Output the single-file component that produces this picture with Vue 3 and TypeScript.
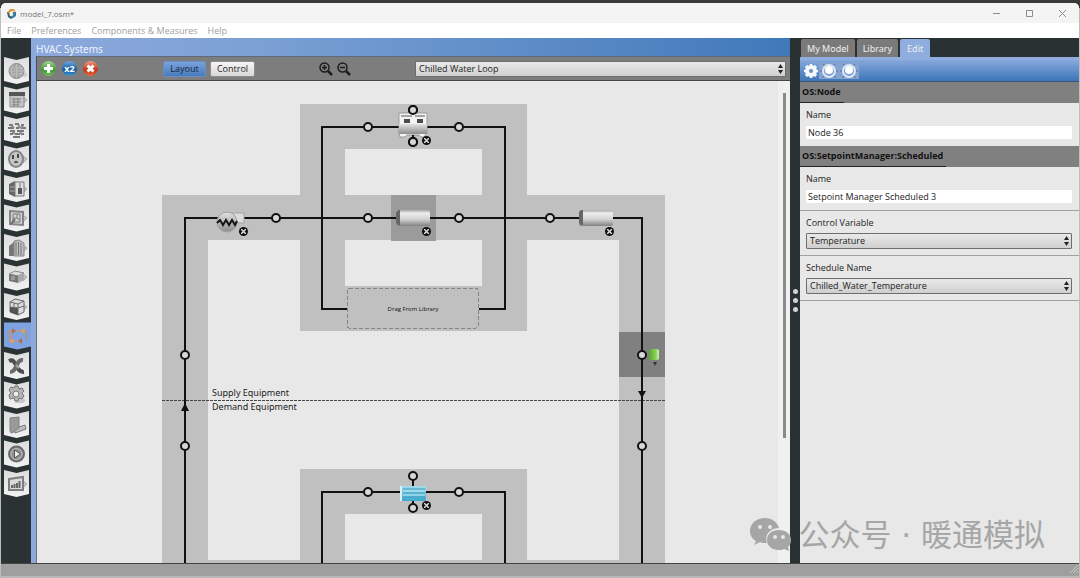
<script setup lang="ts">
import { ref } from 'vue'

interface Stroke {
  d: string
  f?: string
  s?: string
  w?: number
}
interface RailTab {
  name: string
  art: Stroke[]
}
interface Point {
  x: number
  y: number
}

const pointer: Stroke = { d: 'M17 7l4 3-4 4z', f: '#c2c2c2', s: '#a9a9a9', w: 1 }

const railTabs: RailTab[] = [
  {
    name: 'Site',
    art: [
      { d: 'M12 16h8l2-3-3-2z', f: '#cfcfcf' },
      { d: 'M3 10a7.5 7.5 0 1 0 15 0a7.5 7.5 0 1 0-15 0z', f: '#a6a6a6', s: '#8b8b8b' },
      { d: 'M4 7h13M3 10h15M4 13h13M10.500 3v14M7 4c-2 4-2 8 0 12M14 4c2 4 2 8 0 12', s: '#bcbcbc' },
    ],
  },
  {
    name: 'Schedules',
    art: [
      pointer,
      { d: 'M4 4h14v13H4z', f: '#c4c4c4', s: '#8a8a8a' },
      { d: 'M3 2h16v4H3z', f: '#555' },
      { d: 'M6 9h9M6 12h9M6 15h7M8 8v8M12 8v8', s: '#808080' },
    ],
  },
  {
    name: 'Constructions',
    art: [
      { d: 'M3 5h4M9 4h4M15 5h3M2 8h6M10 8h3M15 8h5M4 11h5M11 11h7M4 14h3M9 14h5M15 14h3M7 17h7', s: '#777', w: 2 },
      { d: 'M5 5l3 3M12 4l2 4M17 5l-2 4M6 11l3 3M14 11l2 4', s: '#8a8a8a', w: 2 },
    ],
  },
  {
    name: 'Loads',
    art: [
      pointer,
      { d: 'M3 10a7 8 0 1 0 14 0a7 8 0 1 0-14 0z', f: '#c6c6c6', s: '#858585', w: 2 },
      { d: 'M7 6v4M12 5v4', s: '#444', w: 2 },
      { d: 'M8 14c0-3 4-3 4 0z', f: '#555' },
    ],
  },
  {
    name: 'Space Types',
    art: [
      pointer,
      { d: 'M3 5l6-3v16l-6-3z', f: '#666' },
      { d: 'M9 3h9v14H9z', f: '#dedede', s: '#7a7a7a' },
      { d: 'M4 8h5M4 12h5', s: '#aaa' },
      { d: 'M12 9h4v6h-4z', f: '#555' },
      { d: 'M14 4v6', s: '#777' },
    ],
  },
  {
    name: 'Geometry',
    art: [
      pointer,
      { d: 'M4 3l13 1v13L4 16z', f: '#d2d2d2', s: '#858585', w: 2 },
      { d: 'M7 6h7v8H7zM7 10h4M11 6v4l3 2', s: '#7d7d7d' },
      { d: 'M5 16l4-5', s: '#666', w: 2 },
    ],
  },
  {
    name: 'Facility',
    art: [
      pointer,
      { d: 'M3 8l5-4v14H3z', f: '#777' },
      { d: 'M8 3l5-1 5 3v13H8z', f: '#c0c0c0', s: '#858585' },
      { d: 'M10 4v13M12.500 4v13M15 5v12M3 11h5M3 14h5', s: '#727272' },
    ],
  },
  {
    name: 'Spaces',
    art: [
      pointer,
      { d: 'M3 7l6-3 9 2-6 3z', f: '#dcdcdc', s: '#888' },
      { d: 'M3 7l9 2v7l-9-2z', f: '#777' },
      { d: 'M12 9l6-3v7l-6 3z', f: '#a9a9a9' },
      { d: 'M5 10h4M5 12h4', s: '#bbb' },
    ],
  },
  {
    name: 'Thermal Zones',
    art: [
      pointer,
      { d: 'M4 5l5-3 9 2v11l-6 3-8-3z', f: '#dcdcdc', s: '#6a6a6a' },
      { d: 'M4 10l8 1v7l-8-3z', f: '#4f4f4f' },
      { d: 'M4 5l8 2 6-3M12 7v11M8 6v9M4 10l8 1 6-2', s: '#6a6a6a' },
    ],
  },
  {
    name: 'HVAC Systems',
    art: [
      { d: 'M6 5H3v9h3', s: '#c88e72', w: 2 },
      { d: 'M9 5h6M15 15H8', s: '#b39a92', w: 2 },
      { d: 'M16 5h3v9', s: '#a5968e', w: 2 },
      { d: 'M5 2l4 3-4 3zM15 12l-4 3 4 3z', f: '#ad6f55' },
      { d: 'M15 3h3v4h-3zM3 13h4v4H3z', f: '#d7a070' },
    ],
  },
  {
    name: 'Output Variables',
    art: [
      { d: 'M3 5c8-4 6 12 15 11', s: '#4e4e4e', w: 4 },
      { d: 'M17 4C9 3 12 16 4 16', s: '#6b6b6b', w: 4 },
      { d: 'M10 9l3 3', s: '#aaa', w: 2 },
    ],
  },
  {
    name: 'Simulation Settings',
    art: [
      { d: 'M12 12l8 3-3 3H9z', f: '#c8c8c8' },
      { d: 'M9 1h3l1 3 3-1 2 3-2 2 2 3-2 3-3-1-1 3H9l-1-3-4 1-1-4 2-2-2-3 2-3 3 1z', f: '#b5b5b5', s: '#737373' },
      { d: 'M7 9a3 3 0 1 0 6 0a3 3 0 1 0-6 0z', f: '#ececec', s: '#777' },
    ],
  },
  {
    name: 'Measures',
    art: [
      { d: 'M7 14l12-4 1 4-11 4z', f: '#bbb', s: '#777' },
      { d: 'M4 3l9-1v11l-7 5c-2 0-2-2-2-3z', f: '#9a9a9a', s: '#808080' },
    ],
  },
  {
    name: 'Run Simulation',
    art: [
      { d: 'M3 10a7.500 7.500 0 1 0 15 0a7.500 7.500 0 1 0-15 0z', f: '#909090', s: '#6a6a6a', w: 2 },
      { d: 'M5 10a5.500 5.500 0 1 0 11 0a5.500 5.500 0 1 0-11 0z', s: '#bdbdbd' },
      { d: 'M8.500 6l6 4-6 4z', f: '#eee', s: '#555' },
    ],
  },
  {
    name: 'Results Summary',
    art: [
      pointer,
      { d: 'M3 5l14-2v13H3z', f: '#dadada', s: '#7e7e7e', w: 2 },
      { d: 'M6 14v-3M8.500 14v-4M11 14V9M13.500 14V7', s: '#666', w: 2 },
    ],
  },
]
const activeRail = ref('HVAC Systems')

const loops = ['Chilled Water Loop', 'Condenser Water Loop', 'Hot Water Loop']
const selectedLoop = ref(loops[0])

const inspectorTabs = ['My Model', 'Library', 'Edit']
const activeInspector = ref('Edit')

const nodeName = ref('Node 36')
const managerName = ref('Setpoint Manager Scheduled 3')
const controlVariables = ['Temperature', 'MaximumTemperature', 'MinimumTemperature']
const controlVariable = ref(controlVariables[0])
const schedules = ['Chilled_Water_Temperature', 'Hot_Water_Temperature']
const schedule = ref(schedules[0])

const nodes: Point[] = [
  { x: 331, y: 46 }, { x: 422, y: 46 },
  { x: 239, y: 137 }, { x: 331, y: 137 }, { x: 422, y: 137 }, { x: 513, y: 137 },
  { x: 148, y: 274 }, { x: 605, y: 274 }, { x: 148, y: 365 }, { x: 605, y: 365 },
  { x: 331, y: 411 }, { x: 422, y: 411 },
  { x: 376, y: 29 }, { x: 376, y: 61 }, { x: 376, y: 395 }, { x: 376, y: 427 },
]

const removable = [
  { name: 'Remove coil', x: 207, y: 150 },
  { name: 'Remove chiller', x: 390, y: 59 },
  { name: 'Remove bypass pipe', x: 390, y: 150 },
  { name: 'Remove outlet pipe', x: 573, y: 150 },
  { name: 'Remove cooling coil', x: 390, y: 424 },
]
</script>

<template>
  <div class="desktop">
    <div class="window">
      <header class="titlebar">
        <svg class="app-logo" width="11" height="11" viewBox="0 0 11 11" aria-hidden="true">
          <path d="M1 5L4 1l4 0 2 3-3-1-3 1-1 3z" fill="#e39a3b" />
          <path d="M1 4l2 1 1 3 4 1-3 2-3-2z" fill="#2c5f86" />
          <path d="M7 4l3 0 0 4-3 2-2-1 2-2z" fill="#3d7ca8" />
          <path d="M4 5l3-1 0 3-2 1z" fill="#f6e9d8" />
        </svg>
        <span class="title">model_7.osm*</span>
        <div class="window-buttons">
          <button type="button" aria-label="Minimize"><svg width="9" height="9"><path d="M1 4.500h7" /></svg></button>
          <button type="button" aria-label="Maximize"><svg width="9" height="9"><path d="M1.500 1.500h6v6h-6z" /></svg></button>
          <button type="button" aria-label="Close"><svg width="9" height="9"><path d="M1 1l7 7M8 1l-7 7" /></svg></button>
        </div>
      </header>

      <nav class="menubar">
        <button type="button">File</button>
        <button type="button">Preferences</button>
        <button type="button">Components &amp; Measures</button>
        <button type="button">Help</button>
      </nav>

      <div class="workspace">
        <nav class="rail">
          <button
            v-for="tab in railTabs"
            :key="tab.name"
            type="button"
            class="rail-tab"
            :class="{ active: tab.name === activeRail }"
            :aria-label="tab.name"
            @click="activeRail = tab.name"
          >
            <svg width="22" height="20" viewBox="0 0 22 20">
              <path
                v-for="(p, i) in tab.art"
                :key="i"
                :d="p.d"
                :fill="p.f ?? 'none'"
                :stroke="p.s ?? 'none'"
                :stroke-width="p.w ?? 1"
              />
            </svg>
          </button>
        </nav>

        <main class="editor">
          <h1 class="heading">HVAC Systems</h1>
          <div class="toolbar">
            <div class="round-tools">
              <button type="button" class="round add" aria-label="Add">
                <svg width="15" height="15"><path d="M7.500 3v9M3 7.500h9" stroke="#fff" stroke-width="3" /></svg>
              </button>
              <button type="button" class="round copy">x2</button>
              <button type="button" class="round delete" aria-label="Delete">
                <svg width="15" height="15"><path d="M4.500 4.500l6 6M10.500 4.500l-6 6" stroke="#fff" stroke-width="3" /></svg>
              </button>
            </div>
            <div class="modes">
              <button type="button" class="mode on">Layout</button>
              <button type="button" class="mode">Control</button>
            </div>
            <div class="zooms">
              <button type="button" aria-label="Zoom in">
                <svg width="14" height="14" fill="none" stroke="#1d1d1d"><circle cx="5.500" cy="5.500" r="4.500" stroke-width="1.500" /><path d="M9 9l4 4" stroke-width="2.500" /><path d="M3 5.500h5M5.500 3v5" stroke-width="1.500" /></svg>
              </button>
              <button type="button" aria-label="Zoom out">
                <svg width="14" height="14" fill="none" stroke="#1d1d1d"><circle cx="5.500" cy="5.500" r="4.500" stroke-width="1.500" /><path d="M9 9l4 4" stroke-width="2.500" /><path d="M3 5.500h5" stroke-width="1.500" /></svg>
              </button>
            </div>
            <div class="picker loop-picker">
              <select v-model="selectedLoop" aria-label="System loop">
                <option v-for="loop in loops" :key="loop">{{ loop }}</option>
              </select>
              <svg class="arrows" width="7" height="10"><path d="M3.500 0L6 4H1zM3.500 10L6 6H1z" /></svg>
            </div>
          </div>

          <div class="canvas">
            <div class="scene">
              <svg class="diagram" role="img" aria-label="Chilled water loop diagram">
                <defs>
                  <linearGradient id="metal" x1="0" y1="0" x2="0" y2="1">
                    <stop offset="0" stop-color="#a8a8a8" />
                    <stop offset="0.200" stop-color="#eeeeee" />
                    <stop offset="0.600" stop-color="#cfcfcf" />
                    <stop offset="1" stop-color="#828282" />
                  </linearGradient>
                  <linearGradient id="ball" x1="0" y1="0" x2="0" y2="1">
                    <stop offset="0" stop-color="#e2e2e2" />
                    <stop offset="1" stop-color="#8e8e8e" />
                  </linearGradient>
                  <linearGradient id="water" x1="0" y1="0" x2="0" y2="1">
                    <stop offset="0" stop-color="#a5dcee" />
                    <stop offset="1" stop-color="#3aa8cb" />
                  </linearGradient>
                  <linearGradient id="leaf" x1="0" y1="0" x2="1" y2="0">
                    <stop offset="0" stop-color="#56a52c" />
                    <stop offset="0.700" stop-color="#8ed35c" />
                    <stop offset="1" stop-color="#d6f2bf" />
                  </linearGradient>
                  <g id="pipe">
                    <rect x="0" y="1" width="34" height="16" rx="2" fill="url(#metal)" />
                    <path d="M2 1h2v15H2l-2-2V3z" fill="#666" />
                  </g>
                </defs>

                <path
                  class="band"
                  fill-rule="evenodd"
                  d="M263 23h227v91h138v900H125V114h138zM308 68h137v46H308zM308 159h137v46H308zM171 159h92v91h227v-91h92v320H490v-91H263v91H171zM308 433h137v46H308z"
                />
                <rect x="354" y="114" width="45" height="46" fill="#9b9b9b" />
                <rect x="582" y="251" width="46" height="45" fill="#808080" />
                <path class="divider" d="M125 319h503" />

                <g class="wire">
                  <path d="M148 1000V137h457v863" />
                  <path d="M311 228h-26V46h183v182h-26" />
                  <path d="M285 1000V411h183v589" />
                  <path d="M376 29v32M376 395v32" />
                </g>
                <path d="M148 322l4 8h-8zM605 317l-4-7h8z" fill="#111" />

                <circle v-for="(n, i) in nodes" :key="i" class="node" :cx="n.x" :cy="n.y" r="4" />

                <g>
                  <path d="M362 32h28v20l-3 4h-3l-2-2h-12l-2 2h-5l-1-3z" fill="#f4f4f4" stroke="#999" />
                  <rect x="362" y="43" width="28" height="10" fill="url(#ball)" />
                  <path d="M364 35h11M378 35h10" stroke="#555" />
                  <path d="M367 38h6v4h-6zM380 38h6v4h-6z" fill="#4c4c4c" />
                  <path class="stub" d="M376 54v4" />
                  <circle class="node" cx="376" cy="29" r="4" />
                  <circle class="node" cx="376" cy="61" r="4" />
                </g>

                <g>
                  <path d="M192 132h15v10h-15z" fill="#dcdcdc" stroke="#a5a5a5" />
                  <circle cx="190" cy="141" r="10" fill="url(#ball)" stroke="#a0a0a0" />
                  <path d="M180 142l3-3 3 5 3-5 3 5 3-5 3 5 2-4" fill="none" stroke="#151515" stroke-width="2" />
                </g>

                <use href="#pipe" x="359" y="128" />
                <use href="#pipe" x="542" y="128" />

                <g>
                  <rect x="363" y="405" width="26" height="15" rx="1" fill="url(#water)" />
                  <path d="M366 408h22M366 412h22M366 416h22" stroke="#3f9dc0" />
                  <path d="M366 410h22M366 414h22" stroke="#bfeaf6" />
                  <path d="M364 405v15" stroke="#d8f3fa" stroke-width="2" />
                </g>

                <rect x="612" y="268" width="10" height="11" rx="2" fill="url(#leaf)" />
                <path d="M616 281h4l-2 4z" fill="#333" />

                <rect class="dropzone" x="310" y="207" width="131" height="40" rx="2" />
                <text class="drop-label" x="376" y="230">Drag From Library</text>
                <text class="side-label" x="175" y="315">Supply Equipment</text>
                <text class="side-label" x="175" y="329">Demand Equipment</text>
              </svg>
              <button
                v-for="r in removable"
                :key="r.name"
                type="button"
                class="remove"
                :aria-label="r.name"
                :style="{ left: r.x + 'px', top: r.y + 'px' }"
              >
                <svg width="5" height="5"><path d="M0 0l5 5M5 0l-5 5" stroke="#ddd" stroke-width="1.500" /></svg>
              </button>
            </div>
            <div class="scrollbar"><div class="thumb"></div></div>
          </div>
        </main>

        <div class="splitter"><i></i><i></i><i></i></div>

        <aside class="inspector">
          <div class="inspector-tabs">
            <button
              v-for="tab in inspectorTabs"
              :key="tab"
              type="button"
              :class="{ active: tab === activeInspector }"
              @click="activeInspector = tab"
            >{{ tab }}</button>
          </div>
          <div class="inspector-tools">
            <button type="button" aria-label="Settings">
              <svg width="16" height="16" viewBox="0 0 16 16">
                <path d="M7 1h2l1 2 2-1 2 2-1 2 2 1v2l-2 1 1 2-2 2-2-1-1 2H7l-1-2-2 1-2-2 1-2-2-1V7l2-1-1-2 2-2 2 1z" fill="#f4f8fd" />
                <circle cx="8" cy="8" r="2" fill="#6d8fbd" />
              </svg>
            </button>
            <button type="button" class="dim" aria-label="Inlet port">
              <svg width="20" height="16" viewBox="0 0 20 16">
                <path d="M1 8h18M4 1l3 3M16 1l-3 3M3 15l3-3M17 15l-3-3" stroke="#55739f" />
                <circle cx="10" cy="8" r="6" fill="#7f9fcf" stroke="#dde9f8" stroke-width="2" />
                <circle cx="10" cy="7" r="4" fill="#fff" />
              </svg>
            </button>
            <button type="button" class="dim" aria-label="Outlet port">
              <svg width="20" height="16" viewBox="0 0 20 16">
                <path d="M1 8h18M4 1l3 3M16 1l-3 3M3 15l3-3M17 15l-3-3" stroke="#55739f" />
                <circle cx="10" cy="8" r="6" fill="#7f9fcf" stroke="#dde9f8" stroke-width="2" />
                <circle cx="10" cy="7" r="4" fill="#fff" />
              </svg>
            </button>
          </div>

          <h2><span>OS:Node</span></h2>
          <div class="field">
            <label for="node-name">Name</label>
            <input id="node-name" v-model="nodeName" type="text" />
          </div>
          <h2><span>OS:SetpointManager:Scheduled</span></h2>
          <div class="field ruled">
            <label for="manager-name">Name</label>
            <input id="manager-name" v-model="managerName" type="text" />
          </div>
          <div class="field choice ruled">
            <label for="control-variable">Control Variable</label>
            <div class="picker">
              <select id="control-variable" v-model="controlVariable">
                <option v-for="c in controlVariables" :key="c">{{ c }}</option>
              </select>
              <svg class="arrows" width="7" height="10"><path d="M3.500 0L6 4H1zM3.500 10L6 6H1z" /></svg>
            </div>
          </div>
          <div class="field choice ruled">
            <label for="schedule-name">Schedule Name</label>
            <div class="picker">
              <select id="schedule-name" v-model="schedule">
                <option v-for="s in schedules" :key="s">{{ s }}</option>
              </select>
              <svg class="arrows" width="7" height="10"><path d="M3.500 0L6 4H1zM3.500 10L6 6H1z" /></svg>
            </div>
          </div>
        </aside>
      </div>

      <footer class="statusbar">
        <svg width="10" height="10"><path d="M1 9L9 1M4 9l5-5M7 9l2-2" stroke="#c9c9c9" /></svg>
      </footer>
    </div>

    <div class="watermark">
      <svg width="44" height="36" viewBox="0 0 44 36" aria-hidden="true">
        <path d="M17 1C8 1 2 7 2 14c0 4 2 8 6 10l-2 4 6-3c2 1 4 1 7 1-3-8 3-15 12-15C29 5 24 1 17 1z" fill="#a6a6a6" />
        <path d="M31 13c-7 0-12 4-12 10s5 10 12 10c2 0 4 0 5-1l5 2-1-4c2-2 3-4 3-7 0-6-5-10-12-10z" fill="#a6a6a6" />
        <g fill="#e8e8e8"><circle cx="12" cy="10" r="2" /><circle cx="22" cy="10" r="2" /><circle cx="27" cy="20" r="2" /><circle cx="35" cy="20" r="2" /></g>
      </svg>
      <span>公众号 · 暖通模拟</span>
    </div>
  </div>
</template>

<style>
html,
body {
  margin: 0;
  background: #3a3a3a;
}
</style>

<style scoped>
.desktop {
  position: relative;
  box-sizing: border-box;
  height: 100vh;
  min-height: 520px;
  padding: 3px 1px 0;
  overflow: hidden;
  background: linear-gradient(#3a3a3a 0 8px, #bdbdbd 8px);
  font-family: "Open Sans", "Noto Sans", "Noto Sans CJK SC", sans-serif;
  font-size: 9px;
  color: #222;
}
button,
input,
select {
  font: inherit;
  color: inherit;
  margin: 0;
  padding: 0;
  border: 0;
  background: none;
}
svg {
  display: block;
}
.window {
  display: flex;
  flex-direction: column;
  height: 100%;
  border-radius: 5px 5px 0 0;
  overflow: hidden;
  background: #fff;
}
.titlebar {
  display: flex;
  align-items: center;
  height: 20px;
  flex: none;
  padding-left: 5px;
  background: #f4f4f4;
}
.title {
  margin-left: 3px;
  font-size: 8px;
  color: #757575;
}
.window-buttons {
  display: flex;
  gap: 24px;
  margin-left: auto;
  padding-right: 12px;
}
.window-buttons path {
  fill: none;
  stroke: #8c8c8c;
}
.menubar {
  display: flex;
  align-items: center;
  gap: 10px;
  height: 15px;
  flex: none;
  padding-left: 6px;
  background: #fff;
  color: #a0a0a0;
}
.menubar button {
  line-height: 14px;
}
.workspace {
  display: flex;
  flex: 1;
  min-height: 0;
  background: #2b3233;
}

/* left rail */
.rail {
  display: flex;
  flex-direction: column;
  justify-content: space-between;
  flex: none;
  box-sizing: border-box;
  width: 30px;
  height: 460px;
  padding: 18px 0 0 3px;
}
.rail-tab {
  display: flex;
  align-items: center;
  justify-content: center;
  width: 25px;
  height: 29px;
  background: linear-gradient(#dcdcdc, #f3f3f3);
  clip-path: polygon(0 1px, 50% 4px, 100% 1px, 100% 25px, 50% 28px, 0 25px);
}
.rail-tab.active {
  width: 27px;
  background: #7fa3e0;
  clip-path: polygon(0 1px, 100% 1px, 100% 25px, 50% 28px, 0 25px);
}

/* editor */
.editor {
  display: flex;
  flex-direction: column;
  flex: 1;
  min-width: 0;
  padding-left: 5px;
  background: linear-gradient(90deg, #8da9dd, #7ba0d4 30%, #4079ba);
}
.heading {
  margin: 0;
  height: 18px;
  flex: none;
  font-family: "Noto Sans", "Open Sans", sans-serif;
  font-size: 10px;
  font-weight: 400;
  line-height: 22px;
  color: #eef3fb;
}
.toolbar {
  display: flex;
  align-items: center;
  flex: none;
  box-sizing: border-box;
  height: 25px;
  padding: 0 4px;
  background: #7d7d7d;
  border-top: 1px solid #606a78;
  border-left: 1px solid #4b4f55;
  border-bottom: 1px solid #444;
}
.round-tools {
  display: flex;
  gap: 6px;
}
.round {
  width: 15px;
  height: 15px;
  border-radius: 50%;
  font-size: 9px;
  font-weight: 700;
  line-height: 14px;
  color: #fff;
}
.add {
  background: linear-gradient(#a3d191, #3f9a35 60%, #6fbf55);
}
.copy {
  background: linear-gradient(#6ca7de, #14599f 60%, #3d9bd8);
}
.delete {
  background: linear-gradient(#ee9a80, #c0351a 60%, #e8693c);
}
.modes {
  display: flex;
  gap: 4px;
  margin-left: 65px;
}
.mode {
  width: 45px;
  height: 16px;
  border: 1px solid #8d8d8d;
  border-radius: 2px;
  background: linear-gradient(#f5f5f5, #d8d8d8);
  line-height: 14px;
  color: #222;
}
.mode.on {
  width: 43px;
  background: linear-gradient(#79a2dc, #487bbb);
  border-color: #6a8fc4;
  color: #16243a;
}
.zooms {
  display: flex;
  gap: 4px;
  margin-left: 64px;
}
.picker {
  position: relative;
  display: flex;
}
.picker select {
  appearance: none;
  flex: 1;
  min-width: 0;
  height: 16px;
  padding: 0 16px 0 3px;
  border: 1px solid #6e6e6e;
  border-radius: 1px;
  background: linear-gradient(#e9e9e9, #cfcfcf);
  line-height: 14px;
}
.arrows {
  position: absolute;
  right: 2px;
  top: 3px;
  fill: #222;
  pointer-events: none;
}
.loop-picker {
  flex: 1;
  margin-left: 64px;
}
.canvas {
  display: flex;
  flex: 1;
  min-height: 0;
  border-left: 1px solid #6d7480;
  background: #e8e8e8;
}
.scene {
  position: relative;
  flex: 1;
  min-width: 0;
  overflow: hidden;
}
.diagram {
  width: 100%;
  height: 100%;
}
.band {
  fill: #c0c0c0;
}
.wire path {
  fill: none;
  stroke: #111;
  stroke-width: 2;
}
.stub {
  stroke: #111;
  stroke-width: 2;
}
.node {
  fill: #d8d8d8;
  stroke: #111;
  stroke-width: 2;
}
.divider {
  stroke: #444;
  stroke-dasharray: 3 1;
  shape-rendering: crispEdges;
}
.dropzone {
  fill: #c0c0c0;
  stroke: #858585;
  stroke-dasharray: 4 2;
  shape-rendering: crispEdges;
}
.drop-label {
  font-size: 6px;
  text-anchor: middle;
  fill: #111;
}
.side-label {
  font-family: "Noto Sans", "Open Sans", sans-serif;
  font-size: 9px;
  fill: #222;
}
.remove {
  position: absolute;
  display: flex;
  align-items: center;
  justify-content: center;
  width: 9px;
  height: 9px;
  margin: -4px 0 0 -5px;
  border-radius: 50%;
  background: #111;
}
.scrollbar {
  flex: none;
  width: 7px;
  padding: 12px 0 0 5px;
  background: #f0f0f0;
}
.thumb {
  width: 3px;
  height: 345px;
  background: #8a8a8a;
}
.splitter {
  display: flex;
  flex-direction: column;
  align-items: center;
  justify-content: center;
  gap: 4px;
  flex: none;
  width: 10px;
  background: #2a3132;
}
.splitter i {
  width: 5px;
  height: 5px;
  border-radius: 50%;
  background: #d2d5d5;
}

/* inspector */
.inspector {
  display: flex;
  flex-direction: column;
  flex: none;
  width: 26%;
  max-width: 279px;
  background: #e8e8e8;
}
.inspector-tabs {
  display: flex;
  align-items: flex-start;
  gap: 2px;
  height: 22px;
  padding: 1px 0 0 1px;
  box-sizing: border-box;
  background: #2a3132;
  border-bottom: 3px solid #8fadde;
  font-family: "Noto Sans", "Open Sans", sans-serif;
}
.inspector-tabs button {
  height: 18px;
  padding: 0 6px;
  border-radius: 2px 2px 0 0;
  background: #7a7a7a;
  line-height: 20px;
  color: #f0f0f0;
}
.inspector-tabs .active {
  height: 20px;
  padding: 0 7px;
  background: #8fadde;
}
.inspector-tools {
  display: flex;
  align-items: center;
  box-sizing: border-box;
  height: 22px;
  padding-left: 3px;
  background: linear-gradient(#86a8dc, #3d76b8);
  border-bottom: 1px solid #3a5678;
}
.inspector-tools .dim {
  background: #86a3cf;
}
h2 {
  margin: 0;
  height: 21px;
  background: #808080;
  font-size: 9px;
  font-weight: 700;
  line-height: 19px;
  color: #111;
}
h2 span {
  display: inline-block;
  box-sizing: border-box;
  height: 21px;
  padding: 0 3px 0 2px;
  border-bottom: 1px solid #222;
}
.field {
  padding: 6px 7px 7px 6px;
}
.field label {
  display: block;
  margin-bottom: 5px;
  line-height: 12px;
}
.field input {
  display: block;
  box-sizing: border-box;
  width: 100%;
  height: 13px;
  padding: 0 2px;
  background: #fff;
}
.choice {
  padding-bottom: 6px;
}
.choice label {
  margin-bottom: 4px;
}
.ruled {
  border-bottom: 1px solid #a0a0a0;
}
.statusbar {
  display: flex;
  align-items: flex-end;
  justify-content: flex-end;
  flex: none;
  box-sizing: border-box;
  height: 15px;
  padding-bottom: 2px;
  background: #9f9f9f;
  border-top: 1px solid #444;
  border-bottom: 2px solid #b8b8b8;
}
.watermark {
  position: absolute;
  right: 35px;
  bottom: 21px;
  display: flex;
  align-items: center;
  gap: 6px;
  pointer-events: none;
}
.watermark span {
  font-family: "DejaVu Sans", "Noto Sans CJK SC", sans-serif;
  font-size: 31px;
  line-height: 44px;
  white-space: nowrap;
  color: #a6a6a6;
}
</style>
